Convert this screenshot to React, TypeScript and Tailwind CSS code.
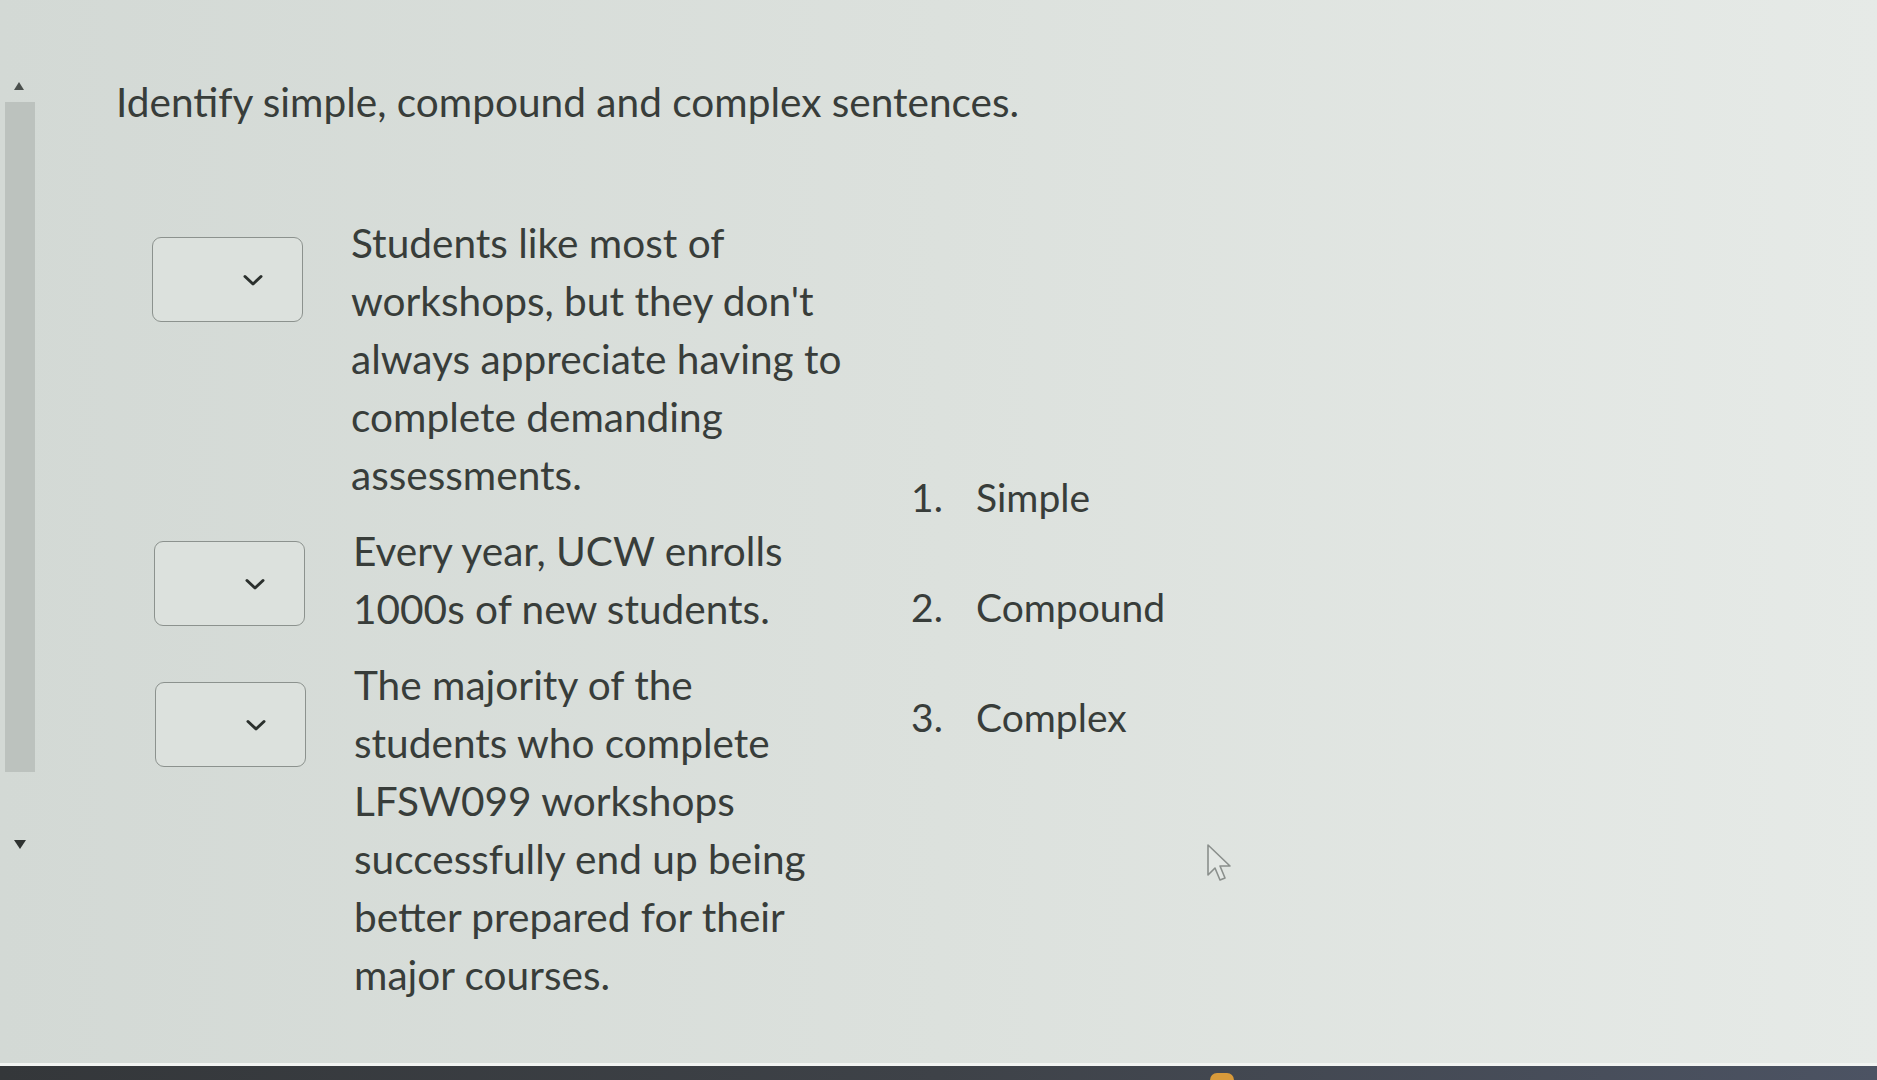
type Item = { lines: string[]; boxOffset: string; shift: string };

const items: Item[] = [
  {
    lines: [
      "Students like most of",
      "workshops, but they don't",
      "always appreciate having to",
      "complete demanding",
      "assessments.",
    ],
    boxOffset: "mt-[23px]",
    shift: "",
  },
  {
    lines: ["Every year, UCW enrolls", "1000s of new students."],
    boxOffset: "mt-[19px]",
    shift: "pl-[2px]",
  },
  {
    lines: [
      "The majority of the",
      "students who complete",
      "LFSW099 workshops",
      "successfully end up being",
      "better prepared for their",
      "major courses.",
    ],
    boxOffset: "mt-[26px]",
    shift: "pl-[3px]",
  },
];

const answers = ["Simple", "Compound", "Complex"];

function Dropdown({ offset, shift }: { offset: string; shift: string }) {
  return (
    <div className={`${shift} shrink-0`}>
      <div
        className={`${offset} flex h-[85px] w-[151px] items-center justify-end rounded-[9px] border-[1.5px] border-[#8c928e] bg-[#dce1dd] pr-[38px]`}
      >
        <svg width="22" height="14" viewBox="0 0 22 14" fill="none">
          <path
            d="M3 3.5 L11 11 L19 3.5"
            stroke="#2b302d"
            strokeWidth="3"
            strokeLinecap="round"
            strokeLinejoin="round"
          />
        </svg>
      </div>
    </div>
  );
}

export default function App() {
  return (
    <div className="relative flex h-[1080px] w-full flex-col overflow-hidden bg-gradient-to-r from-[#d3d9d5] via-[#dce1dd] to-[#e6eae7] font-['Lato','Noto_Sans',sans-serif] text-[#383d3a]">
      <div className="flex flex-1">
        {/* scrollbar */}
        <div className="flex w-[38px] shrink-0 flex-col items-center pt-[82px]">
          <div className="h-0 w-0 border-x-[5px] border-b-[8px] border-x-transparent border-b-[#4a4f4c]" />
          <div className="ml-[2px] mt-[12px] h-[670px] w-[30px] bg-[#bcc2be]" />
          <div className="ml-[2px] mt-[68px] h-0 w-0 border-x-[6px] border-t-[9px] border-x-transparent border-t-[#2f3331]" />
        </div>

        <div className="flex-1 pl-[78px] pt-[74px]">
          <h1 className="text-[40.6px] font-normal leading-[56px]">
            Identify simple, compound and complex sentences.
          </h1>

          <div className="ml-[36px] mt-[84px] flex">
            <div className="flex w-[740px] flex-col gap-[18px]">
              {items.map((item, i) => (
                <div key={i} className="flex gap-[48px]">
                  <Dropdown offset={item.boxOffset} shift={item.shift} />
                  <p className="text-[40.6px] leading-[58px]">
                    {item.lines.map((line) => (
                      <span key={line} className="block whitespace-nowrap">
                        {line}
                      </span>
                    ))}
                  </p>
                </div>
              ))}
            </div>

            <ol className="flex flex-col gap-[52px] pl-[19px] pt-[254px] text-[39px] leading-[58px]">
              {answers.map((a, i) => (
                <li key={a} className="flex">
                  <span className="w-[65px]">{i + 1}.</span>
                  <span>{a}</span>
                </li>
              ))}
            </ol>
          </div>
        </div>
      </div>

      {/* mouse pointer */}
      <svg
        className="absolute left-[1206px] top-[843px]"
        width="28"
        height="42"
        viewBox="0 0 28 42"
      >
        <path
          d="M2 2 L2 32 L9 25 L14 37 L19 35 L14 23 L24 23 Z"
          fill="#e4e8e5"
          stroke="#8a8f8c"
          strokeWidth="1.6"
          strokeLinejoin="round"
        />
      </svg>

      {/* bottom monitor bezel */}
      <div className="relative h-[17px] w-full border-t-[3px] border-[#f2f4f2] bg-gradient-to-r from-[#34373a] via-[#3e4248] to-[#4c5363]">
        <div className="absolute left-[1210px] top-[7px] h-[14px] w-[24px] rounded-full bg-[#d89a3a]" />
      </div>
    </div>
  );
}
